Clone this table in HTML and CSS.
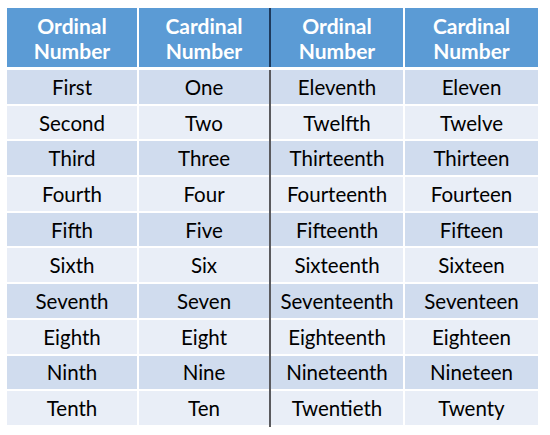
FILE: index.html
```html
<!DOCTYPE html>
<html>
<head>
<meta charset="utf-8">
<link rel="stylesheet" href="styles.css">
</head>
<body>
<div class="table">
  <div class="head">
    <div class="cell">Ordinal<br>Number</div>
    <div class="cell">Cardinal<br>Number</div>
    <div class="cell">Ordinal<br>Number</div>
    <div class="cell">Cardinal<br>Number</div>
  </div>
  <div class="body">
    <div class="cell odd">First</div><div class="cell odd">One</div><div class="cell odd">Eleventh</div><div class="cell odd">Eleven</div>
    <div class="cell even">Second</div><div class="cell even">Two</div><div class="cell even">Twelfth</div><div class="cell even">Twelve</div>
    <div class="cell odd">Third</div><div class="cell odd">Three</div><div class="cell odd">Thirteenth</div><div class="cell odd">Thirteen</div>
    <div class="cell even">Fourth</div><div class="cell even">Four</div><div class="cell even">Fourteenth</div><div class="cell even">Fourteen</div>
    <div class="cell odd">Fifth</div><div class="cell odd">Five</div><div class="cell odd">Fifteenth</div><div class="cell odd">Fifteen</div>
    <div class="cell even">Sixth</div><div class="cell even">Six</div><div class="cell even">Sixteenth</div><div class="cell even">Sixteen</div>
    <div class="cell odd">Seventh</div><div class="cell odd">Seven</div><div class="cell odd">Seventeenth</div><div class="cell odd">Seventeen</div>
    <div class="cell even">Eighth</div><div class="cell even">Eight</div><div class="cell even">Eighteenth</div><div class="cell even">Eighteen</div>
    <div class="cell odd">Ninth</div><div class="cell odd">Nine</div><div class="cell odd">Nineteenth</div><div class="cell odd">Nineteen</div>
    <div class="cell even">Tenth</div><div class="cell even">Ten</div><div class="cell even">Twentieth</div><div class="cell even">Twenty</div>
  </div>
</div>
</body>
</html>
```

FILE: styles.css
```css
html, body {
  margin: 0;
  padding: 0;
  background: #ffffff;
}
body {
  padding: 8px 0 0 7px;
  font-family: Lato, "Liberation Sans", sans-serif;
}
.table {
  width: 531px;
  display: flex;
  flex-direction: column;
  gap: 3px;
}
.head, .body {
  display: grid;
  grid-template-columns: 130px 130px 132px 133px;
  column-gap: 2px;
}
.head {
  height: 59px;
  background: linear-gradient(to right, transparent 262px, #1e3a5c 262px, #1e3a5c 264px, transparent 264px), #ffffff;
}
.body {
  grid-auto-rows: 33.7px;
  row-gap: 2px;
  padding-bottom: 2px;
  background: linear-gradient(to right, transparent 262px, #5a5a5e 262px, #5a5a5e 264px, transparent 264px), #ffffff;
}
.cell {
  display: flex;
  align-items: center;
  justify-content: center;
  text-align: center;
  color: #000000;
  font-size: 20.5px;
}
.head .cell {
  background: #5b9bd5;
  color: #ffffff;
  font-weight: bold;
  line-height: 25px;
  font-size: 21px;
}
.odd { background: #d0dcee; }
.even { background: #e9eef7; }
```
